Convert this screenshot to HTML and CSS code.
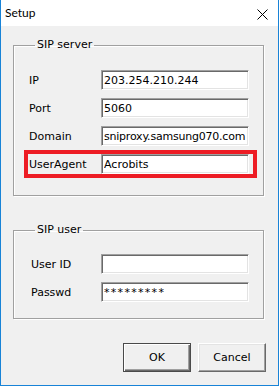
FILE: index.html
```html
<!DOCTYPE html>
<html lang="en">
  <head>
    <meta charset="utf-8">
    <title>Setup</title>
    <link rel="stylesheet" href="styles.css">
  </head>
  <body>
    <div class="window">
      <div class="titlebar">
        <span class="title">Setup</span>
        <svg class="close" width="11" height="11" viewBox="0 0 11 11">
          <path d="M0.5 0.5 L10.5 10.5 M10.5 0.5 L0.5 10.5" stroke="#000" stroke-width="1" fill="none"/>
        </svg>
      </div>

      <div class="client">
        <fieldset class="group group-server">
          <legend>SIP server</legend>
          <div class="row"><label>IP</label><input type="text" class="field" value="203.254.210.244"></div>
          <div class="row"><label>Port</label><input type="text" class="field" value="5060"></div>
          <div class="row"><label>Domain</label><input type="text" class="field field-long" value="sniproxy.samsung070.com"></div>
          <div class="row marked"><label>UserAgent</label><input type="text" class="field" value="Acrobits"></div>
        </fieldset>

        <fieldset class="group group-user">
          <legend>SIP user</legend>
          <div class="row"><label>User ID</label><input type="text" class="field" value=""></div>
          <div class="row"><label>Passwd</label><input type="text" class="field secret" value="*********"></div>
        </fieldset>

        <div class="buttons">
          <button class="btn btn-default">OK</button>
          <button class="btn">Cancel</button>
        </div>
      </div>
    </div>
  </body>
</html>
```

FILE: styles.css
```css
html, body {
    margin: 0;
    padding: 0;
    background: #f0f0f0;
}

.window {
    width: 279px;
    height: 386px;
    box-sizing: border-box;
    border: 1px solid #1883d7;
    border-top: none;
    display: flex;
    flex-direction: column;
    font-family: 'DejaVu Sans', sans-serif;
    font-size: 11px;
    color: #000;
}

.titlebar {
    height: 26px;
    flex: none;
    background: #fff;
    display: flex;
    align-items: center;
    justify-content: space-between;
    padding: 0 10px 0 4px;
}
.title {
    font-family: Lato, sans-serif;
    font-size: 12px;
    margin-top: -1px;
}
.close {
    display: block;
    margin-top: 2px;
}

.client {
    flex: 1;
    background: #f0f0f0;
    padding: 12px 12px 0 12px;
    display: flex;
    flex-direction: column;
}

.group {
    width: 251px;
    box-sizing: border-box;
    margin: 0;
    padding: 0 0 21px 14px;
    border: 1px solid #a0a0a0;
    box-shadow: 1px 1px 0 #fff, inset 1px 1px 0 #fff;
    display: flex;
    flex-direction: column;
    gap: 8px;
}
.group legend {
    margin-left: 7px;
    padding: 0 2px;
    line-height: 14px;
}
.group-server .row:first-of-type {
    margin-top: 18px;
}
.group-user {
    margin-top: 27px;
    padding-bottom: 16px;
}
.group-user .row:first-of-type {
    margin-top: 17px;
}
.group-user label {
    padding-left: 2px;
}

.row {
    width: 225px;
    height: 20px;
    box-sizing: border-box;
    padding: 0 4px 0 1px;
    display: flex;
    align-items: center;
}
.row label {
    width: 72px;
    flex: none;
    box-sizing: border-box;
}
.row.marked {
    outline: 4px solid #ed1c24;
    outline-offset: 0;
}

.field {
    width: 148px;
    height: 20px;
    box-sizing: border-box;
    margin: 0;
    padding: 0 2px 0 2px;
    font-family: 'DejaVu Sans', sans-serif;
    font-size: 11px;
    color: #000;
    background: #fff;
    border: 1px solid;
    border-color: #a0a0a0 #fff #fff #a0a0a0;
    box-shadow: inset 1px 1px 0 #696969, inset -1px -1px 0 #e3e3e3;
    outline: none;
}
.field-long {
    letter-spacing: -0.22px;
    padding-right: 0;
}
.secret {
    letter-spacing: 1.3px;
}

.buttons {
    margin-top: 24px;
    display: flex;
    justify-content: flex-end;
    gap: 7px;
}
.btn {
    width: 68px;
    height: 29px;
    margin: 0;
    padding: 0;
    font-family: 'DejaVu Sans', sans-serif;
    font-size: 11px;
    color: #000;
    background: #f0f0f0;
    border: 1px solid;
    border-color: #fff #696969 #696969 #fff;
    box-shadow: inset -1px -1px 0 #a0a0a0, inset 1px 1px 0 #e3e3e3;
}
.btn-default {
    border-color: #4a4a4a;
    box-shadow: inset 1px 1px 0 #fff, inset -1px -1px 0 #696969, inset -2px -2px 0 #a0a0a0;
}
```
